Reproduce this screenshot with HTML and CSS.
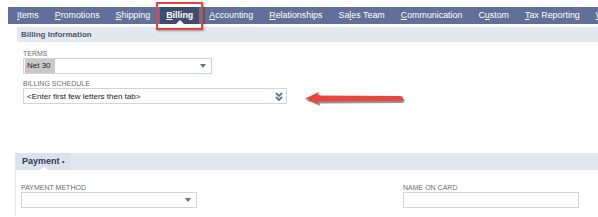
FILE: index.html
```html
<!DOCTYPE html>
<html lang="en">
<head>
  <meta charset="UTF-8" />
  <title>Customer - Billing</title>
  <link rel="stylesheet" href="styles.css">
</head>
<body>
  <div class="page">
    <ul class="tabs">
      <li class="tab"><u>I</u>tems</li>
      <li class="tab"><u>P</u>romotions</li>
      <li class="tab"><u>S</u>hipping</li>
      <li class="tab active"><u>B</u>illing<span class="highlight"></span></li>
      <li class="tab"><u>A</u>ccounting</li>
      <li class="tab"><u>R</u>elationships</li>
      <li class="tab">Sa<u>l</u>es Team</li>
      <li class="tab"><u>C</u>ommunication</li>
      <li class="tab">C<u>u</u>stom</li>
      <li class="tab"><u>T</u>ax Reporting</li>
      <li class="tab"><u>W</u></li>
    </ul>

    <div class="section">
      <div class="section-head">Billing Information</div>

      <div class="field">
        <label>TERMS</label>
        <div class="select terms">
          <span class="selected-text">Net 30</span>
          <span class="caret"></span>
        </div>
      </div>

      <div class="field">
        <label>BILLING SCHEDULE</label>
        <div class="select schedule">
          <span>&lt;Enter first few letters then tab&gt;</span>
          <svg class="chevrons" width="8" height="9" viewBox="0 0 8 9">
            <path d="M1 1 L4 4 L7 1 M1 5 L4 8 L7 5" fill="none" stroke="#5f7196" stroke-width="1.8"/>
          </svg>
        </div>
        <svg class="arrow" width="104" height="18" viewBox="0 0 104 18">
          <g transform="translate(1.5 2)">
            <path d="M14 4.5 L96 5 Q99 5 99 7.5 Q99 10 96 10 L14 10.5 L15 13 L1 7.5 L15 1 Z" fill="#3a3a3a" opacity="0.55"/>
          </g>
          <path d="M14 4.5 L96 5 Q99 5 99 7.5 Q99 10 96 10 L14 10.5 L15 13 L1 7.5 L15 1 Z" fill="#e8473e"/>
        </svg>
      </div>
    </div>

    <div class="section payment">
      <div class="section-head">
        <span class="sub-tab">Payment <b>&bull;</b></span>
      </div>
      <div class="row">
        <div class="field">
          <label>PAYMENT METHOD</label>
          <div class="select method"><span></span><span class="caret"></span></div>
        </div>
        <div class="field">
          <label>NAME ON CARD</label>
          <div class="select card"></div>
        </div>
      </div>
    </div>
  </div>
</body>
</html>
```

FILE: styles.css
```css
* {
  box-sizing: border-box;
}

body {
  margin: 0;
  background: #fff;
  font-family: 'Liberation Sans', Arial, sans-serif;
  overflow: hidden;
}

.page {
  padding: 7px 0 0 8px;
  width: 598px;
}

.tabs {
  display: flex;
  margin: 0;
  padding: 0 0 0 1px;
  list-style: none;
  height: 17px;
  background: #607099;
  white-space: nowrap;
}

.tab {
  flex-shrink: 0;
  padding: 0 8px;
  font-size: 8.9px;
  line-height: 17px;
  color: #fff;
}

.tab.active {
  position: relative;
  padding: 0 6px;
  margin: 0 2px;
  background: #3e4c6d;
  font-weight: bold;
}

.tab.active::after {
  content: "";
  position: absolute;
  left: 50%;
  bottom: 0;
  margin-left: -4px;
  border: 4px solid transparent;
  border-bottom: 4px solid #fff;
  border-top: 0;
}

.highlight {
  position: absolute;
  left: -4px;
  right: -4px;
  top: -5px;
  bottom: -6px;
  border: 2px solid #e2463c;
  box-shadow: 1px 1px 2px rgba(0, 0, 0, 0.35);
}

.section {
  margin: 3px 0 0 9px;
}

.section-head {
  height: 15px;
  padding-left: 4px;
  background: #e4e8ef;
  font-size: 8px;
  font-weight: bold;
  line-height: 15px;
  color: #4a576c;
}

.field {
  position: relative;
  padding: 8px 0 0 6px;
}

.field + .field {
  padding-top: 6px;
}

label {
  display: block;
  height: 7px;
  font-size: 7px;
  line-height: 7px;
  color: #6d6d6d;
  margin-bottom: 1px;
}

.select {
  display: flex;
  align-items: center;
  justify-content: space-between;
  height: 16px;
  padding: 0 5px 0 1px;
  border: 1px solid #d4d4d4;
  font-size: 8px;
  color: #222;
}

.terms {
  width: 189px;
}

.schedule {
  width: 264px;
  padding-left: 3px;
  padding-right: 3px;
}

.selected-text {
  padding: 1px 4px 1px 2px;
  line-height: 12px;
  background: #c9c9c9;
}

.caret {
  width: 0;
  height: 0;
  border-left: 3.5px solid transparent;
  border-right: 3.5px solid transparent;
  border-top: 4px solid #5f7196;
}

.chevrons {
  display: block;
}

.arrow {
  position: absolute;
  left: 287px;
  top: 17px;
}

.payment {
  margin: 49px 0 0 7px;
  border-left: 1px solid #e6e6e6;
  padding-bottom: 8px;
}

.payment .section-head {
  height: 17px;
  padding-left: 0;
  background: #e3e8f0;
}

.sub-tab {
  position: relative;
  display: inline-block;
  height: 17px;
  padding: 0 7px 0 6px;
  background: #dce2ec;
  font-size: 9px;
  line-height: 17px;
  color: #2e3a57;
}

.sub-tab b {
  font-size: 7px;
}

.sub-tab::after {
  content: "";
  position: absolute;
  left: 24px;
  bottom: 0;
  border: 4px solid transparent;
  border-bottom: 3px solid #fff;
  border-top: 0;
}

.row {
  display: flex;
}

.payment .field {
  padding-top: 14px;
  padding-left: 5px;
}

.method {
  width: 176px;
}

.card {
  width: 176px;
}

.row .field + .field {
  margin-left: 201px;
  padding-top: 14px;
}
```
